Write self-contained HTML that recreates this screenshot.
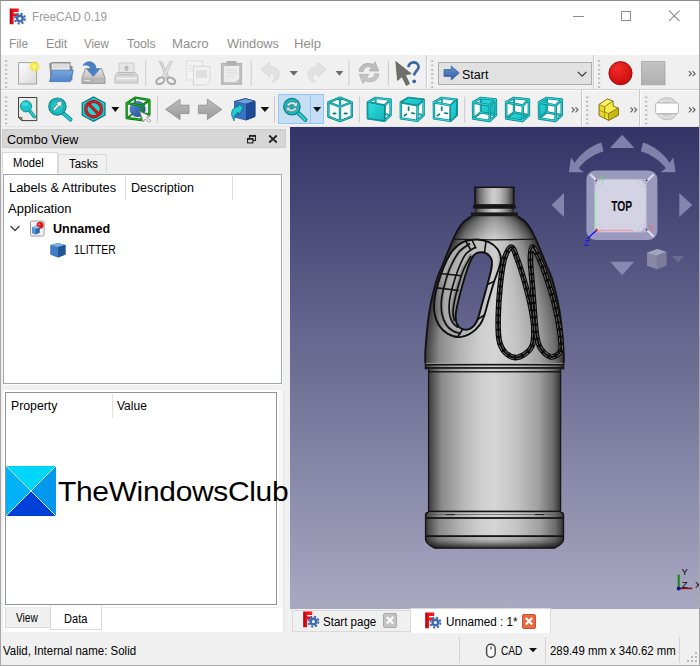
<!DOCTYPE html>
<html><head><meta charset="utf-8"><title>FreeCAD 0.19</title>
<style>
html,body{margin:0;padding:0}
body{width:700px;height:666px;position:relative;overflow:hidden;background:#f0f0f0;font-family:"Liberation Sans",sans-serif;font-size:12px;color:#000}
.a{position:absolute}
.t{position:absolute;white-space:nowrap;line-height:14px}
#title{left:0;top:0;width:700px;height:31px;background:#fff}
#menu{left:0;top:31px;width:700px;height:23.5px;background:#fff}
#menu .t{color:#8e8e8e;font-size:12.5px;top:6.4px}
.grip{position:absolute;width:3px;height:27px;background-image:repeating-linear-gradient(180deg,#a6a6a6 0,#a6a6a6 1.6px,transparent 1.6px,transparent 4.3px)}
.sep{position:absolute;width:1px;height:25px;background:#c9c9c9}
.tbend{position:absolute;width:1px;background:#c4c4c4;box-shadow:1px 0 0 #fafafa}
</style></head>
<body>
<!-- title bar -->
<div id="title" class="a">
  <svg class="a" style="left:9px;top:7.5px" width="18" height="17" viewBox="0 0 17 17"><defs><linearGradient id="gfr1" x1="0" y1="0" x2="1" y2="0"><stop offset="0" stop-color="#a8000c"/><stop offset="0.35" stop-color="#e8101a"/><stop offset="1" stop-color="#ff1a1a"/></linearGradient></defs><path d="M0.2 0.4H9.2V3.9H4.1V5.6H7.8V8.3H4.1V16.2H0.2Z" fill="url(#gfr1)"/><circle cx="10.4" cy="10.6" r="4" fill="#3b69ad"/><circle cx="10.4" cy="10.6" r="5" fill="none" stroke="#3b69ad" stroke-width="1.9" stroke-dasharray="2.1 1.827"/><circle cx="10.4" cy="10.6" r="1.6" fill="#f4f6fa"/></svg>
  <div class="t" id="t_title" style="left:31.9px;top:10px;font-size:12.5px;color:#9b9b9b;transform-origin:0 0;transform:scaleX(0.938)">FreeCAD 0.19</div>
  <div class="a" style="left:572.5px;top:15.5px;width:11px;height:1px;background:#8a8a8a"></div>
  <div class="a" style="left:620.5px;top:10.5px;width:10px;height:10px;border:1px solid #8a8a8a;box-sizing:border-box"></div>
  <svg class="a" style="left:668px;top:10px" width="13" height="12" viewBox="0 0 13 12"><path d="M1 0.7L11.5 11.2M11.5 0.7L1 11.2" stroke="#8a8a8a" stroke-width="1.1" fill="none"/></svg>
</div>
<!-- menu -->
<div id="menu" class="a">
  <div class="t" id="t_file" style="left:9.0px;transform-origin:0 0;transform:scaleX(0.947)">File</div>
  <div class="t" id="t_edit" style="left:45.9px;transform-origin:0 0;transform:scaleX(0.988)">Edit</div>
  <div class="t" id="t_mview" style="left:84.2px;transform-origin:0 0;transform:scaleX(0.922)">View</div>
  <div class="t" id="t_tools" style="left:127.4px;transform-origin:0 0;transform:scaleX(0.984)">Tools</div>
  <div class="t" id="t_macro" style="left:172.3px;transform-origin:0 0;transform:scaleX(1.055)">Macro</div>
  <div class="t" id="t_windows" style="left:226.8px;transform-origin:0 0;transform:scaleX(1.026)">Windows</div>
  <div class="t" id="t_help" style="left:294.3px;transform-origin:0 0;transform:scaleX(1.047)">Help</div>
</div>
<!-- toolbars -->
<div id="tbbg" class="a" style="left:0;top:54.5px;width:700px;height:72.5px;background:#f0f0f0"></div>
<div class="a" style="left:0;top:89px;width:700px;height:1px;background:#d2d2d2"></div><div class="a" style="left:0;top:90px;width:700px;height:1px;background:#fbfbfb"></div>
<div class="a" style="left:0;top:126px;width:700px;height:1px;background:#e4e4e4"></div>
<div class="a" style="left:278px;top:93.5px;width:46px;height:30.5px;background:#c5def5;border:1px solid #93c6f3;box-sizing:border-box"></div>
<div class="a" style="left:310px;top:94px;width:1px;height:29.5px;background:#93c6f3"></div>
<div class="a" style="left:438px;top:62px;width:153.5px;height:22.5px;background:#e1e1e1;border:1px solid #adadad;box-sizing:border-box"></div>
<div class="t" id="t_startwb" style="left:462px;top:67.5px;font-size:12.5px">Start</div>
<svg class="a" style="left:0;top:55px" width="700" height="72" viewBox="0 55 700 72">
<defs>
<linearGradient id="gpage" x1="0" y1="0" x2="1" y2="1"><stop offset="0" stop-color="#fdfdfd"/><stop offset="1" stop-color="#d9d9d9"/></linearGradient>
<radialGradient id="gglow"><stop offset="0" stop-color="#fffef0"/><stop offset="0.3" stop-color="#fff45a"/><stop offset="0.7" stop-color="#f6e428" stop-opacity="0.8"/><stop offset="1" stop-color="#f2e01e" stop-opacity="0"/></radialGradient>
<linearGradient id="gfold" x1="0" y1="0" x2="0" y2="1"><stop offset="0" stop-color="#7ba7dc"/><stop offset="1" stop-color="#4f86c9"/></linearGradient>
<linearGradient id="gdrive" x1="0" y1="0" x2="0" y2="1"><stop offset="0" stop-color="#e6e6e6"/><stop offset="1" stop-color="#a9a9a9"/></linearGradient>
<radialGradient id="gred" cx="0.4" cy="0.3" r="0.8"><stop offset="0" stop-color="#f22a2a"/><stop offset="1" stop-color="#c30a0a"/></radialGradient>
<linearGradient id="ggray" x1="0" y1="0" x2="0" y2="1"><stop offset="0" stop-color="#c3c3c3"/><stop offset="1" stop-color="#b0b0b0"/></linearGradient>
<linearGradient id="garr" x1="0" y1="0" x2="0" y2="1"><stop offset="0" stop-color="#6f97cf"/><stop offset="1" stop-color="#2c5a9e"/></linearGradient>
<linearGradient id="gnav" x1="0" y1="0" x2="0" y2="1"><stop offset="0" stop-color="#bdbdbd"/><stop offset="1" stop-color="#9a9a9a"/></linearGradient>
<linearGradient id="gteal" x1="0" y1="0" x2="1" y2="1"><stop offset="0" stop-color="#2fe0e0"/><stop offset="1" stop-color="#12b4b8"/></linearGradient>
<linearGradient id="gblue" x1="0" y1="0" x2="1" y2="1"><stop offset="0" stop-color="#5b8fd4"/><stop offset="1" stop-color="#1f4f99"/></linearGradient>
</defs>
<rect x="5.2" y="60.3" width="2" height="1.5" fill="#adadad"/>
<rect x="5.2" y="64.6" width="2" height="1.5" fill="#adadad"/>
<rect x="5.2" y="69.0" width="2" height="1.5" fill="#adadad"/>
<rect x="5.2" y="73.3" width="2" height="1.5" fill="#adadad"/>
<rect x="5.2" y="77.7" width="2" height="1.5" fill="#adadad"/>
<rect x="5.2" y="82.0" width="2" height="1.5" fill="#adadad"/>
<rect x="5.2" y="86.4" width="2" height="1.5" fill="#adadad"/>
<rect x="18.6" y="62.6" width="18" height="21.4" fill="url(#gpage)" stroke="#a2a2a2" stroke-width="1"/>
<circle cx="34.4" cy="66.4" r="5.6" fill="url(#gglow)"/>
<path d="M49.2 63.5L52 62H70.5V66H72.5V80.5H50.5Z" fill="#8c8c8c"/>
<path d="M51.5 63.2H69.8V78H51.5Z" fill="#e9e9e9" stroke="#9c9c9c" stroke-width="0.6"/><path d="M53 65H68M53 67H68" stroke="#c8c8c8" stroke-width="0.8"/>
<path d="M52.3 70.2H73.3L70.3 81.6H49.6Z" fill="url(#gfold)" stroke="#3f73b6" stroke-width="0.8"/>
<path d="M85.5 68.5H101.5L105 78V83.5H82V78Z" fill="url(#gdrive)" stroke="#8d8d8d" stroke-width="0.9"/>
<path d="M82.5 78H104.5V83.3H82.5Z" fill="#b4b4b4"/><path d="M84.5 80.5H90" stroke="#e8e8e8" stroke-width="1"/><path d="M96 79.3V82.3M98 79.3V82.3M100 79.3V82.3M102 79.3V82.3" stroke="#c9c9c9" stroke-width="0.8"/>
<path d="M83.2 65.5C85 61 92.5 60 95.5 65.5L95.8 69.3H99.6L93.3 76.3L87 69.3H90.8C90.5 66 86.5 64 83.2 65.5Z" fill="#4a80c4" stroke="#3568ad" stroke-width="0.6"/>
<path d="M119 63H134V73H119Z" fill="#e6e6e6" stroke="#c4c4c4" stroke-width="0.8"/><path d="M126.5 65.3L129.5 68.5H127.7V71H125.3V68.5H123.5Z" fill="#b5b5b5"/>
<path d="M117.5 72.5H135.5L138 76V83H115V76Z" fill="#d8d8d8" stroke="#b4b4b4" stroke-width="0.8"/><path d="M116 78.5H137" stroke="#f2f2f2" stroke-width="1.6"/><path d="M118.5 74.8H134.5" stroke="#bdbdbd" stroke-width="1.2"/>
<rect x="145.2" y="60.7" width="1" height="25.0" fill="#cacaca"/>
<path d="M159.2 61.3L162 62L169 77L166.5 78.5Z" fill="#d8d8d8" stroke="#b4b4b4" stroke-width="0.6"/><path d="M172.2 61.3L169.5 62L162.3 77L164.8 78.5Z" fill="#e2e2e2" stroke="#b4b4b4" stroke-width="0.6"/>
<ellipse cx="160.3" cy="80.8" rx="4.3" ry="2.9" transform="rotate(-30 160.3 80.8)" fill="none" stroke="#a8a8a8" stroke-width="2"/><ellipse cx="171.2" cy="80.8" rx="4.3" ry="2.9" transform="rotate(30 171.2 80.8)" fill="none" stroke="#a8a8a8" stroke-width="2"/>
<rect x="186.3" y="61" width="16" height="19" fill="#f4f4f4" stroke="#d6d6d6" stroke-width="0.8"/><path d="M188.5 66H197M188.5 68.5H197M188.5 71H197" stroke="#dcdcdc" stroke-width="0.8"/>
<path d="M193.5 66.3H210V81L206 85H193.5Z" fill="#f1f1f1" stroke="#d0d0d0" stroke-width="0.8"/><rect x="196" y="70" width="11" height="8" fill="#e0e0e0"/>
<rect x="221.3" y="63.3" width="20.4" height="21" fill="#bcbcbc" stroke="#adadad" stroke-width="0.8"/><rect x="223.8" y="66" width="15.4" height="16.3" fill="#ececec"/><rect x="226.5" y="61" width="10" height="4.6" rx="1" fill="#b0b0b0"/><path d="M226 70H237M226 73H237M226 76H234" stroke="#dadada" stroke-width="1"/><path d="M239.2 78.5V82.3H235.5Z" fill="#c4c4c4"/>
<rect x="250.7" y="60.7" width="1" height="25.0" fill="#cacaca"/>
<path d="M260.8 69.5L269.5 62.3V66.8C276 66.5 279.6 70.5 279 75.5C278.6 79.5 275.5 82 271.5 82.3C274.3 80.5 275.3 78 274.3 75.8C273.5 74 271.8 73.2 269.5 73.3V77Z" fill="#e2e2e2" stroke="#d3d3d3" stroke-width="0.7"/>
<path d="M289.6 71.0H297.9L293.8 75.8Z" fill="#6a6a6a"/>
<path d="M326.4 69.5L317.7 62.3V66.8C311.2 66.5 307.6 70.5 308.2 75.5C308.6 79.5 311.7 82 315.7 82.3C312.9 80.5 311.9 78 312.9 75.8C313.7 74 315.4 73.2 317.7 73.3V77Z" fill="#e2e2e2" stroke="#d3d3d3" stroke-width="0.7"/>
<path d="M335.6 71.0H343.3L339.5 75.8Z" fill="#6a6a6a"/>
<rect x="348.4" y="60.7" width="1" height="25.0" fill="#cacaca"/>
<path d="M359 71.5C359.5 64.5 367 61.5 373 64.5L375.2 61.8L378.8 71H369.3L371.3 67.5C367.5 65.8 363.8 67.5 363.3 71.5Z" fill="#bdbdbd" stroke="#a6a6a6" stroke-width="0.6"/>
<path d="M379 73.8C378.5 80.8 371 83.8 365 80.8L362.8 83.5L359.2 74.3H368.7L366.7 77.8C370.5 79.5 374.2 77.8 374.7 73.8Z" fill="#c4c4c4" stroke="#a6a6a6" stroke-width="0.6"/>
<rect x="387.9" y="60.7" width="1" height="25.0" fill="#cacaca"/>
<path d="M395.8 61.5L411.3 73.8L405.3 74.8L409.5 83.8L406.3 85.4L402 76.5L397.6 80.5Z" fill="#6e6e6a" stroke="#565652" stroke-width="0.7"/>
<path d="M408.6 67.2C408.6 60.8 418.6 60.8 418.6 67C418.6 70.5 414.2 71.2 414.2 75.6" stroke="#3a66a7" stroke-width="2.6" fill="none"/><circle cx="414.2" cy="81.3" r="1.9" fill="#3a66a7"/>
<rect x="425.9" y="55.0" width="1" height="34.0" fill="#c6c6c6"/><rect x="426.9" y="55.0" width="1" height="34.0" fill="#fcfcfc"/>
<rect x="431.2" y="60.3" width="2" height="1.5" fill="#adadad"/>
<rect x="431.2" y="64.6" width="2" height="1.5" fill="#adadad"/>
<rect x="431.2" y="69.0" width="2" height="1.5" fill="#adadad"/>
<rect x="431.2" y="73.3" width="2" height="1.5" fill="#adadad"/>
<rect x="431.2" y="77.7" width="2" height="1.5" fill="#adadad"/>
<rect x="431.2" y="82.0" width="2" height="1.5" fill="#adadad"/>
<rect x="431.2" y="86.4" width="2" height="1.5" fill="#adadad"/>
<path d="M444 69.6H451.3V66L459.2 73L451.3 80V76.4H444Z" fill="url(#garr)" stroke="#2b55a0" stroke-width="0.7"/>
<path d="M577.8 71.9L582.1 76.2L586.4 71.9" stroke="#3c3c3c" stroke-width="1.3" fill="none"/>
<rect x="592.9" y="55.0" width="1" height="34.0" fill="#c6c6c6"/><rect x="593.9" y="55.0" width="1" height="34.0" fill="#fcfcfc"/>
<rect x="598.2" y="60.3" width="2" height="1.5" fill="#adadad"/>
<rect x="598.2" y="64.6" width="2" height="1.5" fill="#adadad"/>
<rect x="598.2" y="69.0" width="2" height="1.5" fill="#adadad"/>
<rect x="598.2" y="73.3" width="2" height="1.5" fill="#adadad"/>
<rect x="598.2" y="77.7" width="2" height="1.5" fill="#adadad"/>
<rect x="598.2" y="82.0" width="2" height="1.5" fill="#adadad"/>
<rect x="598.2" y="86.4" width="2" height="1.5" fill="#adadad"/>
<circle cx="620.5" cy="73.2" r="11.6" fill="url(#gred)" stroke="#9c0808" stroke-width="0.9"/>
<rect x="641.6" y="61.6" width="23.4" height="23.2" fill="url(#ggray)" stroke="#a2a2a2" stroke-width="0.8"/>
<path d="M688.9 71.2l2.4 2.5l-2.4 2.5M692.6 71.2l2.4 2.5l-2.4 2.5" stroke="#606060" stroke-width="1.2" fill="none"/>
<rect x="5.2" y="96.6" width="2" height="1.5" fill="#adadad"/>
<rect x="5.2" y="100.9" width="2" height="1.5" fill="#adadad"/>
<rect x="5.2" y="105.3" width="2" height="1.5" fill="#adadad"/>
<rect x="5.2" y="109.6" width="2" height="1.5" fill="#adadad"/>
<rect x="5.2" y="114.0" width="2" height="1.5" fill="#adadad"/>
<rect x="5.2" y="118.3" width="2" height="1.5" fill="#adadad"/>
<rect x="5.2" y="122.7" width="2" height="1.5" fill="#adadad"/>
<path d="M18.5 97.5H36.8V120.6H22L18.5 117.4Z" fill="#ecece8" stroke="#2a2a2a" stroke-width="0.9"/><path d="M18.5 117.4H22V120.6Z" fill="#9a9a9a" stroke="#2a2a2a" stroke-width="0.6"/>
<path d="M29.5 110.5L34.3 116.8" stroke="#0b8e92" stroke-width="3.4" stroke-linecap="round"/><path d="M29.5 110.5L34.3 116.8" stroke="#22cfd2" stroke-width="1.8" stroke-linecap="round"/><circle cx="26" cy="106.3" r="5.6" fill="#1fc4c8" stroke="#0b8e92" stroke-width="0.9"/><ellipse cx="25" cy="104.3" rx="3.2" ry="2" fill="#4fe0e2" opacity="0.7"/>
<path d="M63.5 113.5L70.5 119.6" stroke="#0b8e92" stroke-width="4" stroke-linecap="round"/><path d="M63.5 113.5L70.5 119.6" stroke="#22cfd2" stroke-width="2.2" stroke-linecap="round"/>
<circle cx="57.4" cy="106.6" r="8.6" fill="#1fc4c8" stroke="#0b8286" stroke-width="1.2"/><circle cx="57.4" cy="106.6" r="6.6" fill="none" stroke="#0fa4a8" stroke-width="1"/>
<path d="M62 101.3L61 107.2L59.3 105.6L54.5 110.8L52.8 109.2L57.7 104L56 102.4Z" fill="#f4f4f4" stroke="#707070" stroke-width="0.6"/>
<path d="M93.6 97L105 103V115.2L93.6 121.2L82.2 115.2V103Z" fill="#24d3d8" stroke="#0a6f74" stroke-width="1.2"/><path d="M93.6 99.6L102.8 104.4V113.9L93.6 118.7L84.4 113.9V104.4Z" fill="none" stroke="#139da2" stroke-width="0.9"/>
<circle cx="93.6" cy="109.1" r="7.7" fill="none" stroke="#8c1010" stroke-width="3"/><circle cx="93.6" cy="109.1" r="7.7" fill="none" stroke="#e01c1c" stroke-width="1.9"/><path d="M88.3 103.8L98.9 114.4" stroke="#8c1010" stroke-width="3"/><path d="M88.3 103.8L98.9 114.4" stroke="#e01c1c" stroke-width="1.9"/>
<path d="M111.4 107.0H119.3L115.3 111.9Z" fill="#111"/>
<path d="M126.6 103.1L135.1 97.7L149.4 100V114L141.7 120L126.7 118Z" fill="#eef0ee"/>
<path d="M135.1 97.7V112.4L126.7 118M135.1 112.4L149.4 114" fill="none" stroke="#0a6a10" stroke-width="1.6"/><path d="M135.1 97.7V112.4L126.7 118M135.1 112.4L149.4 114" fill="none" stroke="#22c42c" stroke-width="0.7"/>
<circle cx="137.7" cy="109.1" r="7.6" fill="url(#gblue)" stroke="#1b3f80" stroke-width="0.6"/>
<path d="M126.6 103.1L142 105.7L141.7 120L126.7 118ZM126.6 103.1L135.1 97.7L149.4 100L142 105.7M149.4 100V114L141.7 120" fill="none" stroke="#0a6a10" stroke-width="2.3" stroke-linejoin="round"/><path d="M126.6 103.1L142 105.7L141.7 120L126.7 118ZM126.6 103.1L135.1 97.7L149.4 100L142 105.7M149.4 100V114L141.7 120" fill="none" stroke="#1cc026" stroke-width="0.9" stroke-linejoin="round"/>
<path d="M139.7 111.3L150.2 116.4L146.6 117.3L150.8 120.6L149.3 122.2L145.2 118.9L143.4 122Z" fill="#f8f8f8" stroke="#7a7a7a" stroke-width="0.7"/>
<rect x="156.9" y="96.5" width="1" height="26.0" fill="#cacaca"/>
<path d="M165.6 109.4L180 99.2V105.2H189V113.6H180V119.6Z" fill="url(#gnav)" stroke="#8a8a8a" stroke-width="0.8"/>
<path d="M221.8 109.4L207.4 99.2V105.2H198.4V113.6H207.4V119.6Z" fill="url(#gnav)" stroke="#8a8a8a" stroke-width="0.8"/>
<path d="M234.5 101.5L245.5 98.6L255 101.3V116.5L246 120L234.5 117Z" fill="#2a5fb0" stroke="#173a78" stroke-width="0.8"/><path d="M234.5 101.5L245.5 98.6L255 101.3L246 104.2Z" fill="#6fa0de" stroke="#173a78" stroke-width="0.6"/><path d="M246 104.2L255 101.3V116.5L246 120Z" fill="#1f4c98" stroke="#173a78" stroke-width="0.6"/><path d="M234.5 101.5L246 104.2V120L234.5 117Z" fill="#3a72c4"/>
<path d="M243.3 107.3L238 103.8L238.3 106.6C233.5 107 230.6 111 232 116.2L234.2 120.8C234 116.5 235.5 113.2 238.6 112.6L238.9 115.3Z" fill="#22cdd2" stroke="#0a6f74" stroke-width="0.8"/>
<path d="M260.6 107.0H269.2L264.9 112.0Z" fill="#111"/>
<rect x="274.0" y="96.5" width="1" height="26.0" fill="#cacaca"/>
<path d="M298 112.8L305.4 119.8" stroke="#0b7c80" stroke-width="4.2" stroke-linecap="round"/><path d="M298 112.8L305.4 119.8" stroke="#24d2d6" stroke-width="2.3" stroke-linecap="round"/>
<circle cx="291.9" cy="106.7" r="8.3" fill="#19b6ba" stroke="#0b7c80" stroke-width="1.1"/><circle cx="291.9" cy="106.7" r="5.4" fill="#17a6aa"/>
<path d="M286.9 105.6C287.8 101.9 293 101 295.8 103.3L297.2 102V106.2H293L294.4 104.8C292.7 103.7 289.9 104 289 105.9Z" fill="#f0f0f0" stroke="#5f7f80" stroke-width="0.5"/><path d="M296.9 107.9C296 111.6 290.8 112.5 288 110.2L286.6 111.5V107.3H290.8L289.4 108.7C291.1 109.8 293.9 109.5 294.8 107.6Z" fill="#e4e4e4" stroke="#5f7f80" stroke-width="0.5"/>
<path d="M313.1 107.0H321.2L317.1 112.0Z" fill="#111"/>
<path d="M340 97.6L351.8 102.2V116.6L340 121.2L328.4 116.6V102.2Z" fill="#f6f8f8"/>
<path d="M340 97.6L351.8 102.2V116.6L340 121.2L328.4 116.6V102.2ZM328.4 102.2L340 106.8L351.8 102.2M340 106.8V121.2M340 97.6V105" fill="none" stroke="#0a7c80" stroke-width="2.3" stroke-linejoin="round"/><path d="M340 97.6L351.8 102.2V116.6L340 121.2L328.4 116.6V102.2ZM328.4 102.2L340 106.8L351.8 102.2M340 106.8V121.2M340 97.6V105" fill="none" stroke="#27d4d8" stroke-width="0.9" stroke-linejoin="round"/>
<ellipse cx="334.5" cy="113.6" rx="2.1" ry="1" fill="#0a7c80"/><ellipse cx="345.7" cy="113.6" rx="2.1" ry="1" fill="#0a7c80"/>
<rect x="358.9" y="96.5" width="1" height="26.0" fill="#cacaca"/>
<path d="M367.8 102.4L375.6 97.9L390.6 99.6L390.6 115.2L384.4 120.9L367.9 118.4Z" fill="#f8fafa"/>
<path d="M375.6 97.9L375.6 103.7 M390.6 115.2L385.4 114.2" fill="none" stroke="#0a7c80" stroke-width="1.8" stroke-linejoin="round"/><path d="M375.6 97.9L375.6 103.7 M390.6 115.2L385.4 114.2" fill="none" stroke="#27d4d8" stroke-width="0.7" stroke-linejoin="round"/>
<path d="M367.8 102.4L384.6 105.4L384.4 120.9L367.9 118.4Z M367.8 102.4L384.6 105.4L390.6 99.6L375.6 97.9Z M384.6 105.4L390.6 99.6L390.6 115.2L384.4 120.9Z" fill="none" stroke="#0a7c80" stroke-width="2.4" stroke-linejoin="round"/><path d="M367.8 102.4L384.6 105.4L384.4 120.9L367.9 118.4Z M367.8 102.4L384.6 105.4L390.6 99.6L375.6 97.9Z M384.6 105.4L390.6 99.6L390.6 115.2L384.4 120.9Z" fill="none" stroke="#27d4d8" stroke-width="1.1" stroke-linejoin="round"/>
<path d="M367.8 102.4L384.6 105.4L384.4 120.9L367.9 118.4Z" fill="url(#gteal)" stroke="#0a7c80" stroke-width="0.9" stroke-linejoin="round"/>
<path d="M400.8 102.4L408.6 97.9L423.6 99.6L423.6 115.2L417.4 120.9L400.9 118.4Z" fill="#f8fafa"/>
<path d="M423.6 115.2L418.4 114.2" fill="none" stroke="#0a7c80" stroke-width="1.8" stroke-linejoin="round"/><path d="M423.6 115.2L418.4 114.2" fill="none" stroke="#27d4d8" stroke-width="0.7" stroke-linejoin="round"/>
<path d="M408.6 110.2L408.6 107.2 M411.6 113.0L414.3 113.5 M406.3 114.2L404.4 115.7" stroke="#0a7c80" stroke-width="1.7" stroke-linecap="round" fill="none"/>
<path d="M400.8 102.4L417.6 105.4L417.4 120.9L400.9 118.4Z M400.8 102.4L417.6 105.4L423.6 99.6L408.6 97.9Z M417.6 105.4L423.6 99.6L423.6 115.2L417.4 120.9Z" fill="none" stroke="#0a7c80" stroke-width="2.4" stroke-linejoin="round"/><path d="M400.8 102.4L417.6 105.4L417.4 120.9L400.9 118.4Z M400.8 102.4L417.6 105.4L423.6 99.6L408.6 97.9Z M417.6 105.4L423.6 99.6L423.6 115.2L417.4 120.9Z" fill="none" stroke="#27d4d8" stroke-width="1.1" stroke-linejoin="round"/>
<path d="M400.8 102.4L417.6 105.4L423.6 99.6L408.6 97.9Z" fill="url(#gteal)" stroke="#0a7c80" stroke-width="0.9" stroke-linejoin="round"/>
<path d="M433.9 102.4L441.7 97.9L456.7 99.6L456.7 115.2L450.5 120.9L434.0 118.4Z" fill="#f8fafa"/>
<path d="M441.7 97.9L441.7 104.4" fill="none" stroke="#0a7c80" stroke-width="1.8" stroke-linejoin="round"/><path d="M441.7 97.9L441.7 104.4" fill="none" stroke="#27d4d8" stroke-width="0.7" stroke-linejoin="round"/>
<path d="M441.7 110.2L441.7 107.2 M444.7 113.0L447.4 113.5 M439.4 114.2L437.5 115.7" stroke="#0a7c80" stroke-width="1.7" stroke-linecap="round" fill="none"/>
<path d="M433.9 102.4L450.7 105.4L450.5 120.9L434.0 118.4Z M433.9 102.4L450.7 105.4L456.7 99.6L441.7 97.9Z M450.7 105.4L456.7 99.6L456.7 115.2L450.5 120.9Z" fill="none" stroke="#0a7c80" stroke-width="2.4" stroke-linejoin="round"/><path d="M433.9 102.4L450.7 105.4L450.5 120.9L434.0 118.4Z M433.9 102.4L450.7 105.4L456.7 99.6L441.7 97.9Z M450.7 105.4L456.7 99.6L456.7 115.2L450.5 120.9Z" fill="none" stroke="#27d4d8" stroke-width="1.1" stroke-linejoin="round"/>
<path d="M450.7 105.4L456.7 99.6L456.7 115.2L450.5 120.9Z" fill="url(#gteal)" stroke="#0a7c80" stroke-width="0.9" stroke-linejoin="round"/>
<rect x="464.2" y="96.5" width="1" height="26.0" fill="#cacaca"/>
<path d="M473.1 102.4L480.9 97.9L495.9 99.6L495.9 115.2L489.7 120.9L473.2 118.4Z" fill="#f8fafa"/>
<path d="M480.9 97.9L495.9 99.6L495.9 115.2L480.9 112.4Z" fill="url(#gteal)"/>
<path d="M480.9 112.4 L480.9 97.9 M480.9 112.4 L495.9 115.2 M480.9 112.4 L473.2 118.4" fill="none" stroke="#0a7c80" stroke-width="2.2" stroke-linejoin="round"/><path d="M480.9 112.4 L480.9 97.9 M480.9 112.4 L495.9 115.2 M480.9 112.4 L473.2 118.4" fill="none" stroke="#27d4d8" stroke-width="0.9" stroke-linejoin="round"/>
<path d="M473.1 102.4L489.9 105.4L489.7 120.9L473.2 118.4Z M473.1 102.4L489.9 105.4L495.9 99.6L480.9 97.9Z M489.9 105.4L495.9 99.6L495.9 115.2L489.7 120.9Z" fill="none" stroke="#0a7c80" stroke-width="2.5" stroke-linejoin="round"/><path d="M473.1 102.4L489.9 105.4L489.7 120.9L473.2 118.4Z M473.1 102.4L489.9 105.4L495.9 99.6L480.9 97.9Z M489.9 105.4L495.9 99.6L495.9 115.2L489.7 120.9Z" fill="none" stroke="#27d4d8" stroke-width="1.1" stroke-linejoin="round"/>
<path d="M506.1 102.4L513.9 97.9L528.9 99.6L528.9 115.2L522.7 120.9L506.2 118.4Z" fill="#f8fafa"/>
<path d="M506.2 118.4L522.7 120.9L528.9 115.2L513.9 112.4Z" fill="url(#gteal)"/>
<path d="M513.9 112.4 L513.9 97.9 M513.9 112.4 L528.9 115.2 M513.9 112.4 L506.2 118.4" fill="none" stroke="#0a7c80" stroke-width="2.2" stroke-linejoin="round"/><path d="M513.9 112.4 L513.9 97.9 M513.9 112.4 L528.9 115.2 M513.9 112.4 L506.2 118.4" fill="none" stroke="#27d4d8" stroke-width="0.9" stroke-linejoin="round"/>
<path d="M506.1 102.4L522.9 105.4L522.7 120.9L506.2 118.4Z M506.1 102.4L522.9 105.4L528.9 99.6L513.9 97.9Z M522.9 105.4L528.9 99.6L528.9 115.2L522.7 120.9Z" fill="none" stroke="#0a7c80" stroke-width="2.5" stroke-linejoin="round"/><path d="M506.1 102.4L522.9 105.4L522.7 120.9L506.2 118.4Z M506.1 102.4L522.9 105.4L528.9 99.6L513.9 97.9Z M522.9 105.4L528.9 99.6L528.9 115.2L522.7 120.9Z" fill="none" stroke="#27d4d8" stroke-width="1.1" stroke-linejoin="round"/>
<path d="M539.0 102.4L546.8 97.9L561.8 99.6L561.8 115.2L555.6 120.9L539.1 118.4Z" fill="#f8fafa"/>
<path d="M539.0 102.4L546.8 97.9L546.8 112.4L539.1 118.4Z" fill="url(#gteal)"/>
<path d="M546.8 112.4 L546.8 97.9 M546.8 112.4 L561.8 115.2 M546.8 112.4 L539.1 118.4" fill="none" stroke="#0a7c80" stroke-width="2.2" stroke-linejoin="round"/><path d="M546.8 112.4 L546.8 97.9 M546.8 112.4 L561.8 115.2 M546.8 112.4 L539.1 118.4" fill="none" stroke="#27d4d8" stroke-width="0.9" stroke-linejoin="round"/>
<path d="M539.0 102.4L555.8 105.4L555.6 120.9L539.1 118.4Z M539.0 102.4L555.8 105.4L561.8 99.6L546.8 97.9Z M555.8 105.4L561.8 99.6L561.8 115.2L555.6 120.9Z" fill="none" stroke="#0a7c80" stroke-width="2.5" stroke-linejoin="round"/><path d="M539.0 102.4L555.8 105.4L555.6 120.9L539.1 118.4Z M539.0 102.4L555.8 105.4L561.8 99.6L546.8 97.9Z M555.8 105.4L561.8 99.6L561.8 115.2L555.6 120.9Z" fill="none" stroke="#27d4d8" stroke-width="1.1" stroke-linejoin="round"/>
<path d="M571.8 107.3l2.4 2.5l-2.4 2.5M575.5 107.3l2.4 2.5l-2.4 2.5" stroke="#606060" stroke-width="1.2" fill="none"/>
<rect x="581.0" y="90.0" width="1" height="36.0" fill="#c6c6c6"/><rect x="582.0" y="90.0" width="1" height="36.0" fill="#fcfcfc"/>
<rect x="586.2" y="96.6" width="2" height="1.5" fill="#adadad"/>
<rect x="586.2" y="100.9" width="2" height="1.5" fill="#adadad"/>
<rect x="586.2" y="105.3" width="2" height="1.5" fill="#adadad"/>
<rect x="586.2" y="109.6" width="2" height="1.5" fill="#adadad"/>
<rect x="586.2" y="114.0" width="2" height="1.5" fill="#adadad"/>
<rect x="586.2" y="118.3" width="2" height="1.5" fill="#adadad"/>
<rect x="586.2" y="122.7" width="2" height="1.5" fill="#adadad"/>
<path d="M599 104.5L607.5 99L613 101.2V106L618.3 108.2V115.2L608.5 120.4L599 115.5Z" fill="#e9d92a" stroke="#6f6408" stroke-width="0.9"/>
<path d="M599 104.5L607.5 99L613 101.2L604.6 106.8Z" fill="#fbf06a" stroke="#6f6408" stroke-width="0.6"/><path d="M604.6 106.8L613 101.2V106L618.3 108.2L608.5 113.6L604.6 111.8Z" fill="#f6e94a" stroke="#6f6408" stroke-width="0.6"/><path d="M608.5 113.6L618.3 108.2V115.2L608.5 120.4Z" fill="#c9b81a" stroke="#6f6408" stroke-width="0.6"/><path d="M599 110L604.6 112.5M604.6 106.8V117.8" stroke="#8a7c10" stroke-width="0.7" fill="none"/>
<path d="M630.5 107.3l2.4 2.5l-2.4 2.5M634.2 107.3l2.4 2.5l-2.4 2.5" stroke="#606060" stroke-width="1.2" fill="none"/>
<rect x="639.1" y="90.0" width="1" height="36.0" fill="#c6c6c6"/><rect x="640.1" y="90.0" width="1" height="36.0" fill="#fcfcfc"/>
<rect x="645.2" y="96.6" width="2" height="1.5" fill="#adadad"/>
<rect x="645.2" y="100.9" width="2" height="1.5" fill="#adadad"/>
<rect x="645.2" y="105.3" width="2" height="1.5" fill="#adadad"/>
<rect x="645.2" y="109.6" width="2" height="1.5" fill="#adadad"/>
<rect x="645.2" y="114.0" width="2" height="1.5" fill="#adadad"/>
<rect x="645.2" y="118.3" width="2" height="1.5" fill="#adadad"/>
<rect x="645.2" y="122.7" width="2" height="1.5" fill="#adadad"/>
<circle cx="667" cy="108.7" r="11.2" fill="#d6d6d6" stroke="#b8b8b8" stroke-width="0.8"/><circle cx="667" cy="108.7" r="8.6" fill="#c2c2c2" stroke="#e6e6e6" stroke-width="0.8"/><path d="M660 101.5L674 101.5M659.5 116L674.5 116" stroke="#ececec" stroke-width="1.2" stroke-dasharray="2 1.2"/>
<rect x="655.6" y="103" width="22.8" height="10.6" rx="1.2" fill="#fdfdfd" stroke="#b4b4b4" stroke-width="0.9"/>
<path d="M688.9 107.3l2.4 2.5l-2.4 2.5M692.6 107.3l2.4 2.5l-2.4 2.5" stroke="#606060" stroke-width="1.2" fill="none"/>
</svg>
<!-- left panel -->
<div id="combo" class="a" style="left:0;top:127px;width:290px;height:509px;background:#f0f0f0">
  <!-- dock title -->
  <div class="a" style="left:2px;top:2px;width:284px;height:19px;background:#d6d6d6;box-shadow:inset 0 0 0 1px #cbcbcb"></div>
  <div class="t" id="t_combo" style="left:7.2px;top:6px;font-size:12.5px;transform-origin:0 0;transform:scaleX(1.009)">Combo View</div>
  <svg class="a" style="left:245.5px;top:6.5px" width="11" height="10" viewBox="0 0 11 10"><rect x="3.5" y="1.5" width="6" height="5" fill="none" stroke="#222" stroke-width="1.1"/><rect x="3" y="1" width="7" height="1.8" fill="#222"/><rect x="1.5" y="4.5" width="5.4" height="4.4" fill="#d6d6d6" stroke="#222" stroke-width="1.1"/><rect x="1" y="4" width="6.4" height="1.8" fill="#222"/></svg>
  <svg class="a" style="left:268px;top:7px" width="10" height="10" viewBox="0 0 10 10"><path d="M1.2 1.5L8.8 8.5M8.8 1.5L1.2 8.5" stroke="#222" stroke-width="1.7" fill="none"/></svg>
  <!-- tabs Model/Tasks -->
  <div class="a" style="left:58px;top:27px;width:49px;height:19px;background:#f0f0f0;border:1px solid #d9d9d9;border-bottom:none;box-sizing:border-box"></div>
  <div class="a" style="left:2px;top:25px;width:56px;height:22px;background:#fff;border:1px solid #d9d9d9;border-bottom:none;box-sizing:border-box"></div>
  <div class="t" id="t_model" style="left:12.9px;top:29px;transform-origin:0 0;transform:scaleX(0.938)">Model</div>
  <div class="t" id="t_tasks" style="left:68.8px;top:30px;transform-origin:0 0;transform:scaleX(0.945)">Tasks</div>
  <!-- tree -->
  <div class="a" style="left:3px;top:47px;width:279px;height:210px;background:#fff;border:1px solid #a3a7ae;box-sizing:border-box;box-shadow:1px 1px 0 #fff"></div>
  <div class="a" style="left:125px;top:49px;width:1px;height:24px;background:#e0e0e0"></div>
  <div class="a" style="left:232px;top:49px;width:1px;height:24px;background:#e0e0e0"></div>
  <div class="t" id="t_labels" style="left:9.0px;top:54px;transform-origin:0 0;transform:scaleX(1.070)">Labels &amp; Attributes</div>
  <div class="t" id="t_desc" style="left:131.0px;top:54px;transform-origin:0 0;transform:scaleX(1.050)">Description</div>
  <div class="t" id="t_app" style="left:8.0px;top:75px;transform-origin:0 0;transform:scaleX(1.083)">Application</div>
  <svg class="a" style="left:9px;top:97px" width="12" height="9" viewBox="0 0 12 9"><path d="M1.5 2L6 6.5L10.5 2" stroke="#444" stroke-width="1.4" fill="none"/></svg>
  <!-- doc icon -->
  <svg class="a" style="left:29px;top:93px" width="17" height="17" viewBox="0 0 17 17">
    <rect x="1.5" y="1" width="13.6" height="15" rx="1.3" fill="#f2f2f2" stroke="#9c9c9c"/>
    <circle cx="11" cy="5.3" r="3.5" fill="#e31212"/><circle cx="10.2" cy="4.4" r="1.2" fill="#f46a6a"/>
    <path d="M3 7.2L7.3 5.8L10.8 7.4V12.8L6.8 14.6L3 12.9Z" fill="#2c63ac"/><path d="M3 7.2L6.8 8.8V14.6L3 12.9Z" fill="#5a93d4"/><path d="M3 7.2L7.3 5.8L10.8 7.4L6.8 8.8Z" fill="#9cc2ea"/>
  </svg>
  <div class="t" id="t_unnamed" style="left:52.8px;top:95px;font-weight:bold;transform-origin:0 0;transform:scaleX(1.044)">Unnamed</div>
  <!-- cube icon -->
  <svg class="a" style="left:49px;top:114px" width="18" height="18" viewBox="0 0 18 18">
    <path d="M1.5 4L9 2L16.5 4V13.5L9 16.5L1.5 13.5Z" fill="#2b62a8"/>
    <path d="M1.5 4L9 6V16.5L1.5 13.5Z" fill="#3f7cc4"/>
    <path d="M1.5 4L9 2L16.5 4L9 6Z" fill="#7fb0e4"/>
    <path d="M9 6L16.5 4V13.5L9 16.5Z" fill="#24549a"/>
  </svg>
  <div class="t" id="t_litter" style="left:74.0px;top:116px;transform-origin:0 0;transform:scaleX(0.872)">1LITTER</div>
  <!-- property tab widget -->
  <div class="a" style="left:3px;top:262.5px;width:280.5px;height:242.5px;background:#fff;box-shadow:inset -1px 0 0 #e4e4e4"></div><div class="a" style="left:279px;top:263px;width:4px;height:218px;background:#f7f7f7"></div>
  <div class="a" style="left:5px;top:265px;width:272px;height:213px;background:#fff;border:1px solid #8f949c;box-sizing:border-box"></div>
  <div class="a" style="left:112px;top:267px;width:1px;height:24px;background:#e0e0e0"></div>
  <div class="t" id="t_prop" style="left:11.0px;top:272px;transform-origin:0 0;transform:scaleX(1.022)">Property</div>
  <div class="t" id="t_value" style="left:117.0px;top:272px;transform-origin:0 0;transform:scaleX(1.000)">Value</div>
  <div class="a" style="left:3px;top:479.6px;width:276px;height:1.2px;background:#eeeeee"></div>
  <!-- bottom tabs -->
  <div class="a" style="left:5px;top:481px;width:46px;height:20px;background:#f0f0f0;border:1px solid #d9d9d9;border-top:none;box-sizing:border-box"></div>
  <div class="a" style="left:50px;top:479px;width:52px;height:24px;background:#fff;border:1px solid #d9d9d9;border-top:none;box-sizing:border-box"></div>
  <div class="t" id="t_view" style="left:16.0px;top:484px;transform-origin:0 0;transform:scaleX(0.846)">View</div>
  <div class="t" id="t_data" style="left:64.0px;top:485px;transform-origin:0 0;transform:scaleX(0.923)">Data</div>
  <!-- watermark -->
  <svg class="a" style="left:6px;top:339px" width="50" height="50" viewBox="0 0 50 50">
    <path d="M0 0H50L25 25Z" fill="#00d6f7"/><path d="M0 0L25 25L0 50Z" fill="#00b2f7"/><path d="M50 0V50L25 25Z" fill="#0097ec"/><path d="M0 50L25 25L50 50Z" fill="#0040d9"/>
    <path d="M0 0L50 50M50 0L0 50" stroke="#fff" stroke-width="0.8"/>
  </svg>
  <div class="t" id="t_twc" style="left:57.8px;top:349px;font-size:28px;line-height:32px;letter-spacing:-0.3px;transform-origin:0 0;transform:scaleX(1.070)">TheWindowsClub</div>
</div>
<!-- 3d view -->
<div id="view" class="a" style="left:290px;top:127px;width:410px;height:482px;background:linear-gradient(#333367,#a9a9c2)"></div>
<svg class="a" style="left:290px;top:127px" width="410" height="482" viewBox="290 127 410 482">
<defs><linearGradient id="gb" x1="0" y1="0" x2="1" y2="0"><stop offset="0.000" stop-color="#262626"/><stop offset="0.015" stop-color="#464646"/><stop offset="0.100" stop-color="#8a8a8a"/><stop offset="0.260" stop-color="#b6b6b6"/><stop offset="0.400" stop-color="#cfcfcf"/><stop offset="0.500" stop-color="#d5d5d5"/><stop offset="0.660" stop-color="#c4c4c4"/><stop offset="0.830" stop-color="#a0a0a0"/><stop offset="0.940" stop-color="#6c6c6c"/><stop offset="0.985" stop-color="#404040"/><stop offset="1.000" stop-color="#202020"/></linearGradient>
<linearGradient id="gcham" x1="0" y1="0" x2="0" y2="1"><stop offset="0" stop-color="#000" stop-opacity="0"/><stop offset="0.45" stop-color="#000" stop-opacity="0.25"/><stop offset="1" stop-color="#000" stop-opacity="0.78"/></linearGradient>
<linearGradient id="gtopsh" x1="0" y1="0" x2="0" y2="1"><stop offset="0" stop-color="#000" stop-opacity="0.28"/><stop offset="1" stop-color="#000" stop-opacity="0"/></linearGradient>
<linearGradient id="gb2" x1="0" y1="0" x2="1" y2="0"><stop offset="0.000" stop-color="#1c1c1c"/><stop offset="0.030" stop-color="#3a3a3a"/><stop offset="0.120" stop-color="#6c6c6c"/><stop offset="0.280" stop-color="#a2a2a2"/><stop offset="0.420" stop-color="#c6c6c6"/><stop offset="0.500" stop-color="#cecece"/><stop offset="0.640" stop-color="#bababa"/><stop offset="0.800" stop-color="#8a8a8a"/><stop offset="0.920" stop-color="#565656"/><stop offset="0.980" stop-color="#323232"/><stop offset="1.000" stop-color="#1a1a1a"/></linearGradient>
</defs>
<rect x="471.00" y="216" width="47.00" height="1" fill="url(#gb)"/>
<rect x="471.00" y="216" width="47.00" height="1" fill="url(#gb2)" opacity="1.00"/>
<rect x="469.58" y="217" width="49.84" height="1" fill="url(#gb)"/>
<rect x="469.58" y="217" width="49.84" height="1" fill="url(#gb2)" opacity="0.99"/>
<rect x="468.10" y="218" width="52.80" height="1" fill="url(#gb)"/>
<rect x="468.10" y="218" width="52.80" height="1" fill="url(#gb2)" opacity="0.98"/>
<rect x="466.63" y="219" width="55.74" height="1" fill="url(#gb)"/>
<rect x="466.63" y="219" width="55.74" height="1" fill="url(#gb2)" opacity="0.97"/>
<rect x="465.25" y="220" width="58.51" height="1" fill="url(#gb)"/>
<rect x="465.25" y="220" width="58.51" height="1" fill="url(#gb2)" opacity="0.97"/>
<rect x="464.03" y="221" width="60.95" height="1" fill="url(#gb)"/>
<rect x="464.03" y="221" width="60.95" height="1" fill="url(#gb2)" opacity="0.96"/>
<rect x="463.02" y="222" width="62.96" height="1" fill="url(#gb)"/>
<rect x="463.02" y="222" width="62.96" height="1" fill="url(#gb2)" opacity="0.95"/>
<rect x="462.13" y="223" width="64.75" height="1" fill="url(#gb)"/>
<rect x="462.13" y="223" width="64.75" height="1" fill="url(#gb2)" opacity="0.94"/>
<rect x="461.31" y="224" width="66.37" height="1" fill="url(#gb)"/>
<rect x="461.31" y="224" width="66.37" height="1" fill="url(#gb2)" opacity="0.93"/>
<rect x="460.57" y="225" width="67.86" height="1" fill="url(#gb)"/>
<rect x="460.57" y="225" width="67.86" height="1" fill="url(#gb2)" opacity="0.93"/>
<rect x="459.88" y="226" width="69.24" height="1" fill="url(#gb)"/>
<rect x="459.88" y="226" width="69.24" height="1" fill="url(#gb2)" opacity="0.92"/>
<rect x="459.23" y="227" width="70.54" height="1" fill="url(#gb)"/>
<rect x="459.23" y="227" width="70.54" height="1" fill="url(#gb2)" opacity="0.91"/>
<rect x="458.61" y="228" width="71.78" height="1" fill="url(#gb)"/>
<rect x="458.61" y="228" width="71.78" height="1" fill="url(#gb2)" opacity="0.90"/>
<rect x="458.00" y="229" width="73.00" height="1" fill="url(#gb)"/>
<rect x="458.00" y="229" width="73.00" height="1" fill="url(#gb2)" opacity="0.89"/>
<rect x="457.40" y="230" width="74.20" height="1" fill="url(#gb)"/>
<rect x="457.40" y="230" width="74.20" height="1" fill="url(#gb2)" opacity="0.88"/>
<rect x="456.83" y="231" width="75.34" height="1" fill="url(#gb)"/>
<rect x="456.83" y="231" width="75.34" height="1" fill="url(#gb2)" opacity="0.88"/>
<rect x="456.29" y="232" width="76.42" height="1" fill="url(#gb)"/>
<rect x="456.29" y="232" width="76.42" height="1" fill="url(#gb2)" opacity="0.87"/>
<rect x="455.77" y="233" width="77.46" height="1" fill="url(#gb)"/>
<rect x="455.77" y="233" width="77.46" height="1" fill="url(#gb2)" opacity="0.86"/>
<rect x="455.27" y="234" width="78.46" height="1" fill="url(#gb)"/>
<rect x="455.27" y="234" width="78.46" height="1" fill="url(#gb2)" opacity="0.85"/>
<rect x="454.79" y="235" width="79.42" height="1" fill="url(#gb)"/>
<rect x="454.79" y="235" width="79.42" height="1" fill="url(#gb2)" opacity="0.84"/>
<rect x="454.32" y="236" width="80.36" height="1" fill="url(#gb)"/>
<rect x="454.32" y="236" width="80.36" height="1" fill="url(#gb2)" opacity="0.83"/>
<rect x="453.86" y="237" width="81.28" height="1" fill="url(#gb)"/>
<rect x="453.86" y="237" width="81.28" height="1" fill="url(#gb2)" opacity="0.82"/>
<rect x="453.41" y="238" width="82.18" height="1" fill="url(#gb)"/>
<rect x="453.41" y="238" width="82.18" height="1" fill="url(#gb2)" opacity="0.82"/>
<rect x="452.95" y="239" width="83.09" height="1" fill="url(#gb)"/>
<rect x="452.95" y="239" width="83.09" height="1" fill="url(#gb2)" opacity="0.81"/>
<rect x="452.51" y="240" width="83.99" height="1" fill="url(#gb)"/>
<rect x="452.51" y="240" width="83.99" height="1" fill="url(#gb2)" opacity="0.80"/>
<rect x="452.06" y="241" width="84.88" height="1" fill="url(#gb)"/>
<rect x="452.06" y="241" width="84.88" height="1" fill="url(#gb2)" opacity="0.79"/>
<rect x="451.63" y="242" width="85.75" height="1" fill="url(#gb)"/>
<rect x="451.63" y="242" width="85.75" height="1" fill="url(#gb2)" opacity="0.78"/>
<rect x="451.19" y="243" width="86.61" height="1" fill="url(#gb)"/>
<rect x="451.19" y="243" width="86.61" height="1" fill="url(#gb2)" opacity="0.78"/>
<rect x="450.77" y="244" width="87.47" height="1" fill="url(#gb)"/>
<rect x="450.77" y="244" width="87.47" height="1" fill="url(#gb2)" opacity="0.77"/>
<rect x="450.34" y="245" width="88.31" height="1" fill="url(#gb)"/>
<rect x="450.34" y="245" width="88.31" height="1" fill="url(#gb2)" opacity="0.76"/>
<rect x="449.92" y="246" width="89.15" height="1" fill="url(#gb)"/>
<rect x="449.92" y="246" width="89.15" height="1" fill="url(#gb2)" opacity="0.75"/>
<rect x="449.51" y="247" width="89.99" height="1" fill="url(#gb)"/>
<rect x="449.51" y="247" width="89.99" height="1" fill="url(#gb2)" opacity="0.74"/>
<rect x="449.09" y="248" width="90.81" height="1" fill="url(#gb)"/>
<rect x="449.09" y="248" width="90.81" height="1" fill="url(#gb2)" opacity="0.73"/>
<rect x="448.68" y="249" width="91.64" height="1" fill="url(#gb)"/>
<rect x="448.68" y="249" width="91.64" height="1" fill="url(#gb2)" opacity="0.72"/>
<rect x="448.27" y="250" width="92.46" height="1" fill="url(#gb)"/>
<rect x="448.27" y="250" width="92.46" height="1" fill="url(#gb2)" opacity="0.72"/>
<rect x="447.86" y="251" width="93.28" height="1" fill="url(#gb)"/>
<rect x="447.86" y="251" width="93.28" height="1" fill="url(#gb2)" opacity="0.71"/>
<rect x="447.45" y="252" width="94.10" height="1" fill="url(#gb)"/>
<rect x="447.45" y="252" width="94.10" height="1" fill="url(#gb2)" opacity="0.70"/>
<rect x="447.04" y="253" width="94.92" height="1" fill="url(#gb)"/>
<rect x="447.04" y="253" width="94.92" height="1" fill="url(#gb2)" opacity="0.69"/>
<rect x="446.63" y="254" width="95.73" height="1" fill="url(#gb)"/>
<rect x="446.63" y="254" width="95.73" height="1" fill="url(#gb2)" opacity="0.68"/>
<rect x="446.23" y="255" width="96.54" height="1" fill="url(#gb)"/>
<rect x="446.23" y="255" width="96.54" height="1" fill="url(#gb2)" opacity="0.68"/>
<rect x="445.83" y="256" width="97.33" height="1" fill="url(#gb)"/>
<rect x="445.83" y="256" width="97.33" height="1" fill="url(#gb2)" opacity="0.67"/>
<rect x="445.44" y="257" width="98.12" height="1" fill="url(#gb)"/>
<rect x="445.44" y="257" width="98.12" height="1" fill="url(#gb2)" opacity="0.66"/>
<rect x="445.05" y="258" width="98.90" height="1" fill="url(#gb)"/>
<rect x="445.05" y="258" width="98.90" height="1" fill="url(#gb2)" opacity="0.65"/>
<rect x="444.66" y="259" width="99.68" height="1" fill="url(#gb)"/>
<rect x="444.66" y="259" width="99.68" height="1" fill="url(#gb2)" opacity="0.64"/>
<rect x="444.27" y="260" width="100.46" height="1" fill="url(#gb)"/>
<rect x="444.27" y="260" width="100.46" height="1" fill="url(#gb2)" opacity="0.63"/>
<rect x="443.88" y="261" width="101.24" height="1" fill="url(#gb)"/>
<rect x="443.88" y="261" width="101.24" height="1" fill="url(#gb2)" opacity="0.62"/>
<rect x="443.49" y="262" width="102.02" height="1" fill="url(#gb)"/>
<rect x="443.49" y="262" width="102.02" height="1" fill="url(#gb2)" opacity="0.62"/>
<rect x="443.10" y="263" width="102.81" height="1" fill="url(#gb)"/>
<rect x="443.10" y="263" width="102.81" height="1" fill="url(#gb2)" opacity="0.61"/>
<rect x="442.70" y="264" width="103.60" height="1" fill="url(#gb)"/>
<rect x="442.70" y="264" width="103.60" height="1" fill="url(#gb2)" opacity="0.60"/>
<rect x="442.30" y="265" width="104.41" height="1" fill="url(#gb)"/>
<rect x="442.30" y="265" width="104.41" height="1" fill="url(#gb2)" opacity="0.59"/>
<rect x="441.88" y="266" width="105.24" height="1" fill="url(#gb)"/>
<rect x="441.88" y="266" width="105.24" height="1" fill="url(#gb2)" opacity="0.58"/>
<rect x="441.45" y="267" width="106.09" height="1" fill="url(#gb)"/>
<rect x="441.45" y="267" width="106.09" height="1" fill="url(#gb2)" opacity="0.57"/>
<rect x="441.02" y="268" width="106.96" height="1" fill="url(#gb)"/>
<rect x="441.02" y="268" width="106.96" height="1" fill="url(#gb2)" opacity="0.57"/>
<rect x="440.58" y="269" width="107.84" height="1" fill="url(#gb)"/>
<rect x="440.58" y="269" width="107.84" height="1" fill="url(#gb2)" opacity="0.56"/>
<rect x="440.14" y="270" width="108.71" height="1" fill="url(#gb)"/>
<rect x="440.14" y="270" width="108.71" height="1" fill="url(#gb2)" opacity="0.55"/>
<rect x="439.71" y="271" width="109.59" height="1" fill="url(#gb)"/>
<rect x="439.71" y="271" width="109.59" height="1" fill="url(#gb2)" opacity="0.54"/>
<rect x="439.28" y="272" width="110.44" height="1" fill="url(#gb)"/>
<rect x="439.28" y="272" width="110.44" height="1" fill="url(#gb2)" opacity="0.53"/>
<rect x="438.86" y="273" width="111.28" height="1" fill="url(#gb)"/>
<rect x="438.86" y="273" width="111.28" height="1" fill="url(#gb2)" opacity="0.53"/>
<rect x="438.46" y="274" width="112.09" height="1" fill="url(#gb)"/>
<rect x="438.46" y="274" width="112.09" height="1" fill="url(#gb2)" opacity="0.52"/>
<rect x="438.07" y="275" width="112.86" height="1" fill="url(#gb)"/>
<rect x="438.07" y="275" width="112.86" height="1" fill="url(#gb2)" opacity="0.51"/>
<rect x="437.70" y="276" width="113.60" height="1" fill="url(#gb)"/>
<rect x="437.70" y="276" width="113.60" height="1" fill="url(#gb2)" opacity="0.50"/>
<rect x="437.36" y="277" width="114.28" height="1" fill="url(#gb)"/>
<rect x="437.36" y="277" width="114.28" height="1" fill="url(#gb2)" opacity="0.49"/>
<rect x="437.04" y="278" width="114.91" height="1" fill="url(#gb)"/>
<rect x="437.04" y="278" width="114.91" height="1" fill="url(#gb2)" opacity="0.48"/>
<rect x="436.74" y="279" width="115.53" height="1" fill="url(#gb)"/>
<rect x="436.74" y="279" width="115.53" height="1" fill="url(#gb2)" opacity="0.47"/>
<rect x="436.43" y="280" width="116.14" height="1" fill="url(#gb)"/>
<rect x="436.43" y="280" width="116.14" height="1" fill="url(#gb2)" opacity="0.47"/>
<rect x="436.13" y="281" width="116.73" height="1" fill="url(#gb)"/>
<rect x="436.13" y="281" width="116.73" height="1" fill="url(#gb2)" opacity="0.46"/>
<rect x="435.84" y="282" width="117.32" height="1" fill="url(#gb)"/>
<rect x="435.84" y="282" width="117.32" height="1" fill="url(#gb2)" opacity="0.45"/>
<rect x="435.55" y="283" width="117.90" height="1" fill="url(#gb)"/>
<rect x="435.55" y="283" width="117.90" height="1" fill="url(#gb2)" opacity="0.44"/>
<rect x="435.27" y="284" width="118.47" height="1" fill="url(#gb)"/>
<rect x="435.27" y="284" width="118.47" height="1" fill="url(#gb2)" opacity="0.43"/>
<rect x="434.99" y="285" width="119.02" height="1" fill="url(#gb)"/>
<rect x="434.99" y="285" width="119.02" height="1" fill="url(#gb2)" opacity="0.43"/>
<rect x="434.71" y="286" width="119.57" height="1" fill="url(#gb)"/>
<rect x="434.71" y="286" width="119.57" height="1" fill="url(#gb2)" opacity="0.42"/>
<rect x="434.44" y="287" width="120.11" height="1" fill="url(#gb)"/>
<rect x="434.44" y="287" width="120.11" height="1" fill="url(#gb2)" opacity="0.41"/>
<rect x="434.18" y="288" width="120.64" height="1" fill="url(#gb)"/>
<rect x="434.18" y="288" width="120.64" height="1" fill="url(#gb2)" opacity="0.40"/>
<rect x="433.92" y="289" width="121.16" height="1" fill="url(#gb)"/>
<rect x="433.92" y="289" width="121.16" height="1" fill="url(#gb2)" opacity="0.39"/>
<rect x="433.66" y="290" width="121.67" height="1" fill="url(#gb)"/>
<rect x="433.66" y="290" width="121.67" height="1" fill="url(#gb2)" opacity="0.38"/>
<rect x="433.41" y="291" width="122.18" height="1" fill="url(#gb)"/>
<rect x="433.41" y="291" width="122.18" height="1" fill="url(#gb2)" opacity="0.38"/>
<rect x="433.16" y="292" width="122.67" height="1" fill="url(#gb)"/>
<rect x="433.16" y="292" width="122.67" height="1" fill="url(#gb2)" opacity="0.37"/>
<rect x="432.92" y="293" width="123.16" height="1" fill="url(#gb)"/>
<rect x="432.92" y="293" width="123.16" height="1" fill="url(#gb2)" opacity="0.36"/>
<rect x="432.68" y="294" width="123.63" height="1" fill="url(#gb)"/>
<rect x="432.68" y="294" width="123.63" height="1" fill="url(#gb2)" opacity="0.35"/>
<rect x="432.45" y="295" width="124.10" height="1" fill="url(#gb)"/>
<rect x="432.45" y="295" width="124.10" height="1" fill="url(#gb2)" opacity="0.34"/>
<rect x="432.22" y="296" width="124.56" height="1" fill="url(#gb)"/>
<rect x="432.22" y="296" width="124.56" height="1" fill="url(#gb2)" opacity="0.33"/>
<rect x="431.99" y="297" width="125.01" height="1" fill="url(#gb)"/>
<rect x="431.99" y="297" width="125.01" height="1" fill="url(#gb2)" opacity="0.32"/>
<rect x="431.77" y="298" width="125.45" height="1" fill="url(#gb)"/>
<rect x="431.77" y="298" width="125.45" height="1" fill="url(#gb2)" opacity="0.32"/>
<rect x="431.56" y="299" width="125.89" height="1" fill="url(#gb)"/>
<rect x="431.56" y="299" width="125.89" height="1" fill="url(#gb2)" opacity="0.31"/>
<rect x="431.34" y="300" width="126.32" height="1" fill="url(#gb)"/>
<rect x="431.34" y="300" width="126.32" height="1" fill="url(#gb2)" opacity="0.30"/>
<rect x="431.13" y="301" width="126.73" height="1" fill="url(#gb)"/>
<rect x="431.13" y="301" width="126.73" height="1" fill="url(#gb2)" opacity="0.29"/>
<rect x="430.93" y="302" width="127.14" height="1" fill="url(#gb)"/>
<rect x="430.93" y="302" width="127.14" height="1" fill="url(#gb2)" opacity="0.28"/>
<rect x="430.73" y="303" width="127.54" height="1" fill="url(#gb)"/>
<rect x="430.73" y="303" width="127.54" height="1" fill="url(#gb2)" opacity="0.28"/>
<rect x="430.54" y="304" width="127.93" height="1" fill="url(#gb)"/>
<rect x="430.54" y="304" width="127.93" height="1" fill="url(#gb2)" opacity="0.27"/>
<rect x="430.35" y="305" width="128.30" height="1" fill="url(#gb)"/>
<rect x="430.35" y="305" width="128.30" height="1" fill="url(#gb2)" opacity="0.26"/>
<rect x="430.16" y="306" width="128.67" height="1" fill="url(#gb)"/>
<rect x="430.16" y="306" width="128.67" height="1" fill="url(#gb2)" opacity="0.25"/>
<rect x="429.98" y="307" width="129.03" height="1" fill="url(#gb)"/>
<rect x="429.98" y="307" width="129.03" height="1" fill="url(#gb2)" opacity="0.24"/>
<rect x="429.81" y="308" width="129.38" height="1" fill="url(#gb)"/>
<rect x="429.81" y="308" width="129.38" height="1" fill="url(#gb2)" opacity="0.23"/>
<rect x="429.64" y="309" width="129.72" height="1" fill="url(#gb)"/>
<rect x="429.64" y="309" width="129.72" height="1" fill="url(#gb2)" opacity="0.22"/>
<rect x="429.47" y="310" width="130.06" height="1" fill="url(#gb)"/>
<rect x="429.47" y="310" width="130.06" height="1" fill="url(#gb2)" opacity="0.22"/>
<rect x="429.31" y="311" width="130.38" height="1" fill="url(#gb)"/>
<rect x="429.31" y="311" width="130.38" height="1" fill="url(#gb2)" opacity="0.21"/>
<rect x="429.15" y="312" width="130.70" height="1" fill="url(#gb)"/>
<rect x="429.15" y="312" width="130.70" height="1" fill="url(#gb2)" opacity="0.20"/>
<rect x="428.99" y="313" width="131.01" height="1" fill="url(#gb)"/>
<rect x="428.99" y="313" width="131.01" height="1" fill="url(#gb2)" opacity="0.19"/>
<rect x="428.84" y="314" width="131.32" height="1" fill="url(#gb)"/>
<rect x="428.84" y="314" width="131.32" height="1" fill="url(#gb2)" opacity="0.18"/>
<rect x="428.69" y="315" width="131.61" height="1" fill="url(#gb)"/>
<rect x="428.69" y="315" width="131.61" height="1" fill="url(#gb2)" opacity="0.18"/>
<rect x="428.55" y="316" width="131.90" height="1" fill="url(#gb)"/>
<rect x="428.55" y="316" width="131.90" height="1" fill="url(#gb2)" opacity="0.17"/>
<rect x="428.41" y="317" width="132.19" height="1" fill="url(#gb)"/>
<rect x="428.41" y="317" width="132.19" height="1" fill="url(#gb2)" opacity="0.16"/>
<rect x="428.27" y="318" width="132.47" height="1" fill="url(#gb)"/>
<rect x="428.27" y="318" width="132.47" height="1" fill="url(#gb2)" opacity="0.15"/>
<rect x="428.13" y="319" width="132.74" height="1" fill="url(#gb)"/>
<rect x="428.13" y="319" width="132.74" height="1" fill="url(#gb2)" opacity="0.14"/>
<rect x="428.00" y="320" width="133.00" height="1" fill="url(#gb)"/>
<rect x="428.00" y="320" width="133.00" height="1" fill="url(#gb2)" opacity="0.13"/>
<rect x="427.87" y="321" width="133.27" height="1" fill="url(#gb)"/>
<rect x="427.87" y="321" width="133.27" height="1" fill="url(#gb2)" opacity="0.12"/>
<rect x="427.74" y="322" width="133.52" height="1" fill="url(#gb)"/>
<rect x="427.74" y="322" width="133.52" height="1" fill="url(#gb2)" opacity="0.12"/>
<rect x="427.61" y="323" width="133.78" height="1" fill="url(#gb)"/>
<rect x="427.61" y="323" width="133.78" height="1" fill="url(#gb2)" opacity="0.11"/>
<rect x="427.49" y="324" width="134.02" height="1" fill="url(#gb)"/>
<rect x="427.49" y="324" width="134.02" height="1" fill="url(#gb2)" opacity="0.10"/>
<rect x="427.37" y="325" width="134.25" height="1" fill="url(#gb)"/>
<rect x="427.37" y="325" width="134.25" height="1" fill="url(#gb2)" opacity="0.09"/>
<rect x="427.26" y="326" width="134.48" height="1" fill="url(#gb)"/>
<rect x="427.26" y="326" width="134.48" height="1" fill="url(#gb2)" opacity="0.08"/>
<rect x="427.15" y="327" width="134.69" height="1" fill="url(#gb)"/>
<rect x="427.15" y="327" width="134.69" height="1" fill="url(#gb2)" opacity="0.07"/>
<rect x="427.05" y="328" width="134.90" height="1" fill="url(#gb)"/>
<rect x="427.05" y="328" width="134.90" height="1" fill="url(#gb2)" opacity="0.07"/>
<rect x="426.95" y="329" width="135.09" height="1" fill="url(#gb)"/>
<rect x="426.95" y="329" width="135.09" height="1" fill="url(#gb2)" opacity="0.06"/>
<rect x="426.86" y="330" width="135.28" height="1" fill="url(#gb)"/>
<rect x="426.86" y="330" width="135.28" height="1" fill="url(#gb2)" opacity="0.05"/>
<rect x="426.77" y="331" width="135.47" height="1" fill="url(#gb)"/>
<rect x="426.77" y="331" width="135.47" height="1" fill="url(#gb2)" opacity="0.04"/>
<rect x="426.68" y="332" width="135.64" height="1" fill="url(#gb)"/>
<rect x="426.68" y="332" width="135.64" height="1" fill="url(#gb2)" opacity="0.03"/>
<rect x="426.59" y="333" width="135.81" height="1" fill="url(#gb)"/>
<rect x="426.59" y="333" width="135.81" height="1" fill="url(#gb2)" opacity="0.03"/>
<rect x="426.51" y="334" width="135.98" height="1" fill="url(#gb)"/>
<rect x="426.43" y="335" width="136.14" height="1" fill="url(#gb)"/>
<rect x="426.35" y="336" width="136.30" height="1" fill="url(#gb)"/>
<rect x="426.27" y="337" width="136.45" height="1" fill="url(#gb)"/>
<rect x="426.20" y="338" width="136.61" height="1" fill="url(#gb)"/>
<rect x="426.12" y="339" width="136.76" height="1" fill="url(#gb)"/>
<rect x="426.05" y="340" width="136.91" height="1" fill="url(#gb)"/>
<rect x="425.97" y="341" width="137.05" height="1" fill="url(#gb)"/>
<rect x="425.90" y="342" width="137.20" height="1" fill="url(#gb)"/>
<rect x="425.82" y="343" width="137.35" height="1" fill="url(#gb)"/>
<rect x="425.75" y="344" width="137.51" height="1" fill="url(#gb)"/>
<rect x="425.67" y="345" width="137.66" height="1" fill="url(#gb)"/>
<rect x="425.59" y="346" width="137.82" height="1" fill="url(#gb)"/>
<rect x="425.52" y="347" width="137.97" height="1" fill="url(#gb)"/>
<rect x="425.45" y="348" width="138.10" height="1" fill="url(#gb)"/>
<rect x="425.39" y="349" width="138.22" height="1" fill="url(#gb)"/>
<rect x="425.33" y="350" width="138.33" height="1" fill="url(#gb)"/>
<rect x="425.29" y="351" width="138.43" height="1" fill="url(#gb)"/>
<rect x="425.25" y="352" width="138.51" height="1" fill="url(#gb)"/>
<rect x="425.21" y="353" width="138.57" height="1" fill="url(#gb)"/>
<rect x="425.19" y="354" width="138.62" height="1" fill="url(#gb)"/>
<rect x="425.17" y="355" width="138.65" height="1" fill="url(#gb)"/>
<rect x="425.17" y="356" width="138.66" height="1" fill="url(#gb)"/>
<rect x="425.17" y="357" width="138.66" height="1" fill="url(#gb)"/>
<rect x="425.18" y="358" width="138.65" height="1" fill="url(#gb)"/>
<rect x="425.18" y="359" width="138.63" height="1" fill="url(#gb)"/>
<rect x="425.19" y="360" width="138.62" height="1" fill="url(#gb)"/>
<rect x="425.20" y="361" width="138.60" height="1" fill="url(#gb)"/>
<rect x="425.20" y="362" width="138.60" height="1" fill="url(#gb)"/>
<path d="M471.0 216.5 L468.1 218.5 L465.2 220.5 L463.0 222.5 L461.3 224.5 L459.9 226.5 L458.6 228.5 L457.4 230.5 L456.3 232.5 L455.3 234.5 L454.3 236.5 L453.4 238.5 L535.6 238.5 L534.7 236.5 L533.7 234.5 L532.7 232.5 L531.6 230.5 L530.4 228.5 L529.1 226.5 L527.7 224.5 L526.0 222.5 L523.8 220.5 L520.9 218.5 L518.0 216.5 Z" fill="url(#gtopsh)"/>
<path d="M471.0 216.5 L468.1 218.5 L465.2 220.5 L463.0 222.5 L461.3 224.5 L459.9 226.5 L458.6 228.5 L457.4 230.5 L456.3 232.5 L455.3 234.5 L454.3 236.5 L453.4 238.5 L452.5 240.5 L451.6 242.5 L450.8 244.5 L449.9 246.5 L449.1 248.5 L448.3 250.5 L447.5 252.5 L446.6 254.5 L445.8 256.5 L445.0 258.5 L444.3 260.5 L443.5 262.5 L442.7 264.5 L441.9 266.5 L441.0 268.5 L440.1 270.5 L439.3 272.5 L438.5 274.5 L437.7 276.5 L437.0 278.5 L436.4 280.5 L435.8 282.5 L435.3 284.5 L434.7 286.5 L434.2 288.5 L433.7 290.5 L433.2 292.5 L432.7 294.5 L432.2 296.5 L431.8 298.5 L431.3 300.5 L430.9 302.5 L430.5 304.5 L430.2 306.5 L429.8 308.5 L429.5 310.5 L429.1 312.5 L428.8 314.5 L428.5 316.5 L428.3 318.5 L428.0 320.5 L427.7 322.5 L427.5 324.5 L427.3 326.5 L427.1 328.5 L426.9 330.5 L426.7 332.5 L426.5 334.5 L426.4 336.5 L426.2 338.5 L426.0 340.5 L425.9 342.5 L425.7 344.5 L425.6 346.5 L425.4 348.5 L425.3 350.5 L425.2 352.5 L425.2 354.5 L425.2 356.5 L425.2 358.5 L425.2 360.5 L425.2 362.4" fill="none" stroke="#101010" stroke-width="1.6"/>
<path d="M518.0 216.5 L520.9 218.5 L523.8 220.5 L526.0 222.5 L527.7 224.5 L529.1 226.5 L530.4 228.5 L531.6 230.5 L532.7 232.5 L533.7 234.5 L534.7 236.5 L535.6 238.5 L536.5 240.5 L537.4 242.5 L538.2 244.5 L539.1 246.5 L539.9 248.5 L540.7 250.5 L541.5 252.5 L542.4 254.5 L543.2 256.5 L544.0 258.5 L544.7 260.5 L545.5 262.5 L546.3 264.5 L547.1 266.5 L548.0 268.5 L548.9 270.5 L549.7 272.5 L550.5 274.5 L551.3 276.5 L552.0 278.5 L552.6 280.5 L553.2 282.5 L553.7 284.5 L554.3 286.5 L554.8 288.5 L555.3 290.5 L555.8 292.5 L556.3 294.5 L556.8 296.5 L557.2 298.5 L557.7 300.5 L558.1 302.5 L558.5 304.5 L558.8 306.5 L559.2 308.5 L559.5 310.5 L559.9 312.5 L560.2 314.5 L560.5 316.5 L560.7 318.5 L561.0 320.5 L561.3 322.5 L561.5 324.5 L561.7 326.5 L561.9 328.5 L562.1 330.5 L562.3 332.5 L562.5 334.5 L562.6 336.5 L562.8 338.5 L563.0 340.5 L563.1 342.5 L563.3 344.5 L563.4 346.5 L563.6 348.5 L563.7 350.5 L563.8 352.5 L563.8 354.5 L563.8 356.5 L563.8 358.5 L563.8 360.5 L563.8 362.4" fill="none" stroke="#101010" stroke-width="1.6"/>
<path d="M453.0 239.2Q494.5 240.4 536.0 239.2" fill="none" stroke="#161616" stroke-width="1.3"/>
<rect x="474.9" y="187.3" width="39" height="17.6" fill="url(#gb2)"/><rect x="474.9" y="187.3" width="39" height="17.6" fill="none" stroke="#141414" stroke-width="1.5"/>
<rect x="475" y="208" width="38.8" height="5" fill="url(#gb2)"/>
<rect x="473" y="204.9" width="42.8" height="3.9" rx="1" fill="#161616"/>
<rect x="470.8" y="212.4" width="47.2" height="4" fill="#1a1a1a"/>
<rect x="425.2" y="362" width="138.6" height="7.4" fill="url(#gb)"/>
<rect x="428.3" y="369" width="132.6" height="4" fill="url(#gb)"/>
<rect x="425.2" y="362.9" width="138.6" height="0.9" fill="#e4e4e4" opacity="0.7"/>
<rect x="425.2" y="363.8" width="138.6" height="1.7" fill="#131313"/>
<rect x="425.2" y="367.1" width="138.6" height="1.7" fill="#131313"/>
<rect x="428.3" y="371.1" width="132.4" height="1.7" fill="#131313"/>
<path d="M425.3 353.5V369.3M563.7 353.5V369.3" stroke="#141414" stroke-width="1.2"/>
<rect x="428.3" y="372.6" width="132.6" height="139" fill="url(#gb)"/>
<path d="M428.5 369V512M560.7 369V512" stroke="#141414" stroke-width="1.1"/>
<path d="M425.5 515Q425.5 512.3 428.5 512.3H560.5Q563.6 512.3 563.6 515V539.5Q563.3 544 554.5 548.2H434.5Q425.8 544 425.5 539.5Z" fill="url(#gb)"/>
<path d="M425.5 536.3H563.6V539.5Q563.3 544 554.5 548.2H434.5Q425.8 544 425.5 539.5Z" fill="url(#gcham)"/>
<rect x="428.3" y="510.6" width="132.6" height="1.6" fill="#131313"/>
<rect x="427" y="514.3" width="135" height="0.7" fill="#555"/><rect x="446" y="514.2" width="9" height="0.9" fill="#161616"/><rect x="535" y="514.2" width="9" height="0.9" fill="#161616"/>
<rect x="425.5" y="517.1" width="138.1" height="1.8" fill="#131313"/>
<rect x="425.5" y="535.2" width="138.1" height="1.9" fill="#131313"/>
<path d="M425.5 515Q425.5 512.3 428.5 512.3M560.5 512.3Q563.6 512.3 563.6 515M425.5 514.5V539.5Q425.8 544 434.5 548.2H554.5Q563.3 544 563.6 539.5V514.5" fill="none" stroke="#141414" stroke-width="1.2"/>
<defs><linearGradient id="gbg" gradientUnits="userSpaceOnUse" x1="0" y1="127" x2="0" y2="608.6"><stop offset="0" stop-color="#333367"/><stop offset="1" stop-color="#a9a9c2"/></linearGradient>
<linearGradient id="gh" gradientUnits="userSpaceOnUse" x1="434" y1="0" x2="501" y2="0"><stop offset="0" stop-color="#5a5a5a"/><stop offset="0.15" stop-color="#a8a8a8"/><stop offset="0.4" stop-color="#b4b4b4"/><stop offset="0.75" stop-color="#c6c6c6"/><stop offset="0.93" stop-color="#cfcfcf"/><stop offset="1" stop-color="#9a9a9a"/></linearGradient></defs>
<path d="M476.8 239.5C481.1 239.5 485.4 240.5 488.9 242.1C492.3 243.7 495.5 246.1 497.5 249.0C499.5 251.9 500.9 255.9 501.0 259.4C501.1 262.8 499.5 266.0 498.4 269.7C497.2 273.4 495.7 276.9 494.1 281.8C492.5 286.7 490.5 293.6 488.9 299.1C487.3 304.6 486.0 310.4 484.6 314.6C483.2 318.8 482.5 321.1 480.3 324.1C478.1 327.1 475.1 330.6 471.6 332.8C468.1 335.0 463.5 337.0 459.5 337.1C455.5 337.2 450.9 335.6 447.5 333.6C444.1 331.6 441.0 328.4 438.8 325.0C436.6 321.6 435.2 317.2 434.5 312.9C433.8 308.6 433.9 304.0 434.5 299.1C435.1 294.2 436.4 289.0 438.0 283.5C439.6 278.0 441.6 271.8 444.0 266.3C446.4 260.8 449.4 254.7 452.6 250.7C455.8 246.7 459.0 244.0 463.0 242.1C467.0 240.2 472.5 239.5 476.8 239.5Z" fill="url(#gh)" stroke="#0e0e0e" stroke-width="1.9"/>
<path d="M471.0 256.0C469.8 258.3 465.7 264.8 463.5 270.0C461.3 275.2 459.5 281.8 458.0 287.0C456.5 292.2 455.3 296.7 454.5 301.0C453.7 305.3 453.0 309.7 453.0 313.0C453.0 316.3 454.2 319.7 454.5 321.0" fill="none" stroke="#000" stroke-opacity="0.2" stroke-width="5" stroke-linecap="round"/>
<path d="M470.0 243.5C468.2 244.9 462.3 247.9 459.0 252.0C455.7 256.1 452.4 262.5 450.0 268.0C447.6 273.5 445.9 279.7 444.5 285.0C443.1 290.3 441.9 295.2 441.5 300.0C441.1 304.8 441.2 309.9 442.0 314.0C442.8 318.1 444.2 321.7 446.0 324.5C447.8 327.3 450.5 329.5 453.0 331.0C455.5 332.5 459.7 333.2 461.0 333.6" fill="none" stroke="#000" stroke-opacity="0.1" stroke-width="4"/>
<path d="M470.0 243.5C468.2 244.9 462.3 247.9 459.0 252.0C455.7 256.1 452.4 262.5 450.0 268.0C447.6 273.5 445.9 279.7 444.5 285.0C443.1 290.3 441.9 295.2 441.5 300.0C441.1 304.8 441.2 309.9 442.0 314.0C442.8 318.1 444.2 321.7 446.0 324.5C447.8 327.3 450.5 329.5 453.0 331.0C455.5 332.5 459.7 333.2 461.0 333.6" fill="none" stroke="#111" stroke-width="1.7"/>
<path d="M476.0 247.0C474.2 248.2 468.5 250.7 465.5 254.5C462.5 258.3 460.2 264.6 458.0 270.0C455.8 275.4 453.9 281.8 452.5 287.0C451.1 292.2 450.0 296.5 449.5 301.0C449.0 305.5 449.0 310.4 449.5 314.0C450.0 317.6 451.1 320.2 452.5 322.5C453.9 324.8 457.1 326.7 458.0 327.5" fill="none" stroke="#111" stroke-width="1.7"/>
<path d="M471.0 256.0C469.8 258.3 465.7 264.8 463.5 270.0C461.3 275.2 459.5 281.8 458.0 287.0C456.5 292.2 455.3 296.7 454.5 301.0C453.7 305.3 453.0 309.7 453.0 313.0C453.0 316.3 454.2 319.7 454.5 321.0" fill="none" stroke="#111" stroke-width="1.7"/>
<path d="M438 273.2L461.5 275.8M437 287.9L458.8 290.5M457.5 337L462.5 329.5M466 241.5L470.5 249.5M472 240L476 248.5M486 241.3L484.5 252.5M494.3 281.3L487.5 284.5M484.3 315L477.5 319.5" stroke="#111" stroke-width="1.6" fill="none"/>
<path d="M478.5 252.5C480.6 252.1 484.1 252.2 486.3 253.3C488.5 254.5 490.6 256.9 491.5 259.4C492.4 261.8 492.2 263.7 491.5 268.0C490.8 272.3 488.8 279.2 487.2 285.3C485.6 291.4 483.7 298.3 482.0 304.3C480.3 310.3 478.7 317.5 476.8 321.5C474.9 325.5 473.1 327.1 470.8 328.4C468.5 329.7 465.3 330.0 463.0 329.3C460.7 328.6 458.2 326.6 457.0 324.1C455.8 321.7 455.4 318.8 455.7 314.6C456.0 310.4 457.3 304.9 458.7 299.1C460.1 293.4 462.2 285.9 463.9 280.1C465.6 274.3 467.4 268.5 469.0 264.5C470.6 260.5 471.8 257.9 473.4 255.9C475.0 253.9 476.4 252.9 478.5 252.5Z" fill="url(#gbg)" stroke="#0e0e0e" stroke-width="1.9"/>
<path d="M511.3 247.0C509.1 247.0 506.2 252.9 504.3 259.3C502.4 265.8 501.2 276.2 500.2 285.7C499.2 295.2 498.4 307.0 498.2 316.1C498.0 325.2 498.0 334.3 499.2 340.4C500.4 346.5 502.6 349.7 505.3 352.6C508.0 355.5 512.0 357.4 515.4 357.6C518.8 357.8 522.6 355.8 525.5 353.6C528.4 351.4 531.2 349.1 532.6 344.5C534.0 339.9 534.0 332.6 533.7 326.2C533.4 319.8 532.1 313.4 530.6 306.0C529.1 298.6 526.7 289.4 524.5 281.6C522.3 273.8 519.6 265.1 517.4 259.3C515.2 253.5 513.5 247.0 511.3 247.0Z" fill="none" stroke="#0c0c0c" stroke-width="5.6"/>
<path d="M511.3 247.0C509.1 247.0 506.2 252.9 504.3 259.3C502.4 265.8 501.2 276.2 500.2 285.7C499.2 295.2 498.4 307.0 498.2 316.1C498.0 325.2 498.0 334.3 499.2 340.4C500.4 346.5 502.6 349.7 505.3 352.6C508.0 355.5 512.0 357.4 515.4 357.6C518.8 357.8 522.6 355.8 525.5 353.6C528.4 351.4 531.2 349.1 532.6 344.5C534.0 339.9 534.0 332.6 533.7 326.2C533.4 319.8 532.1 313.4 530.6 306.0C529.1 298.6 526.7 289.4 524.5 281.6C522.3 273.8 519.6 265.1 517.4 259.3C515.2 253.5 513.5 247.0 511.3 247.0Z" fill="none" stroke="#8a8a8a" stroke-width="3.1" stroke-dasharray="5 2.2"/>
<path d="M511.3 247.0C509.1 247.0 506.2 252.9 504.3 259.3C502.4 265.8 501.2 276.2 500.2 285.7C499.2 295.2 498.4 307.0 498.2 316.1C498.0 325.2 498.0 334.3 499.2 340.4C500.4 346.5 502.6 349.7 505.3 352.6C508.0 355.5 512.0 357.4 515.4 357.6C518.8 357.8 522.6 355.8 525.5 353.6C528.4 351.4 531.2 349.1 532.6 344.5C534.0 339.9 534.0 332.6 533.7 326.2C533.4 319.8 532.1 313.4 530.6 306.0C529.1 298.6 526.7 289.4 524.5 281.6C522.3 273.8 519.6 265.1 517.4 259.3C515.2 253.5 513.5 247.0 511.3 247.0Z" fill="none" stroke="#0c0c0c" stroke-width="1.9"/>
<path d="M532.4 247.0C531.0 247.3 530.4 252.9 530.4 259.3C530.4 265.8 531.7 276.2 532.4 285.7C533.1 295.2 534.0 307.7 534.7 316.1C535.4 324.6 535.7 331.0 536.7 336.4C537.7 341.8 538.5 345.1 540.7 348.5C542.9 351.9 547.1 355.6 549.9 356.6C552.7 357.6 555.7 356.1 557.6 354.6C559.5 353.1 561.0 352.2 561.2 347.5C561.4 342.8 560.2 333.8 559.0 326.2C557.8 318.6 556.1 310.3 553.9 301.9C551.7 293.4 548.3 282.9 545.8 275.5C543.3 268.1 540.9 262.1 538.7 257.3C536.5 252.6 533.8 246.7 532.4 247.0Z" fill="none" stroke="#0c0c0c" stroke-width="5.6"/>
<path d="M532.4 247.0C531.0 247.3 530.4 252.9 530.4 259.3C530.4 265.8 531.7 276.2 532.4 285.7C533.1 295.2 534.0 307.7 534.7 316.1C535.4 324.6 535.7 331.0 536.7 336.4C537.7 341.8 538.5 345.1 540.7 348.5C542.9 351.9 547.1 355.6 549.9 356.6C552.7 357.6 555.7 356.1 557.6 354.6C559.5 353.1 561.0 352.2 561.2 347.5C561.4 342.8 560.2 333.8 559.0 326.2C557.8 318.6 556.1 310.3 553.9 301.9C551.7 293.4 548.3 282.9 545.8 275.5C543.3 268.1 540.9 262.1 538.7 257.3C536.5 252.6 533.8 246.7 532.4 247.0Z" fill="none" stroke="#8a8a8a" stroke-width="3.1" stroke-dasharray="5 2.2"/>
<path d="M532.4 247.0C531.0 247.3 530.4 252.9 530.4 259.3C530.4 265.8 531.7 276.2 532.4 285.7C533.1 295.2 534.0 307.7 534.7 316.1C535.4 324.6 535.7 331.0 536.7 336.4C537.7 341.8 538.5 345.1 540.7 348.5C542.9 351.9 547.1 355.6 549.9 356.6C552.7 357.6 555.7 356.1 557.6 354.6C559.5 353.1 561.0 352.2 561.2 347.5C561.4 342.8 560.2 333.8 559.0 326.2C557.8 318.6 556.1 310.3 553.9 301.9C551.7 293.4 548.3 282.9 545.8 275.5C543.3 268.1 540.9 262.1 538.7 257.3C536.5 252.6 533.8 246.7 532.4 247.0Z" fill="none" stroke="#0c0c0c" stroke-width="1.9"/>
<g fill="#9a9ac2" opacity="0.74">
<path d="M622.2 134.8L634.4 148H610Z"/>
<path d="M622.2 275.2L634 261.8H610.2Z"/>
<path d="M551.5 205L564 193V217Z"/>
<path d="M692.3 205L679.3 193V217Z"/>
<path d="M601.2 142.5L603.6 151.2C592.5 154.8 584.2 160.6 578.6 168.2L583.8 172.2L568.8 172.2L571 157.4L574.8 162.8C581 153.2 590 146.4 601.2 142.5Z"/>
<path d="M643.2 142.5L640.8 151.2C651.9 154.8 660.2 160.6 665.8 168.2L660.6 172.2L675.6 172.2L673.4 157.4L669.6 162.8C663.4 153.2 654.4 146.4 643.2 142.5Z"/>
</g>
<path d="M647 252.8L657.5 249L666.3 252V265.5L657 269.3L647 265.8Z" fill="#8888a6"/><path d="M647 252.8L657.5 249L666.3 252L656.8 255.6Z" fill="#a4a4c0"/><path d="M656.8 255.6L666.3 252V265.5L657 269.3Z" fill="#7c7c9a"/>
<path d="M671.6 256H684.2L678 262.4Z" fill="#6a6a8c"/>
<rect x="586.4" y="170.4" width="71" height="69.6" rx="9" fill="#a3a3c6" opacity="0.9"/>
<rect x="594.8" y="179.3" width="51.4" height="52.8" rx="2" fill="#d3d3e3"/>
<rect x="594.8" y="179.3" width="51.4" height="52.8" rx="2" fill="none" stroke="#bcbcd2" stroke-width="0.8"/>
<path d="M594.8 179.3h6l-6 6ZM646.2 179.3h-6l6 6ZM594.8 232.1h6l-6-6ZM646.2 232.1h-6l6-6Z" fill="#b4b4d0"/>
<g stroke="#e4e4f0" stroke-width="2.2" opacity="0.9"><path d="M590.5 174.5L598 182M653.5 174.5L646 182M590.5 236.5L598 229M653.5 236.5L646 229"/></g>
<g fill="none" stroke="#c2c2d6" stroke-width="0.8"><path d="M594.8 187.5Q603 187.5 603 179.3M646.2 187.5Q638 187.5 638 179.3M594.8 224Q603 224 603 232.1M646.2 224Q638 224 638 232.1"/></g>
<g fill="#3a3a6a"><circle cx="596.3" cy="180.6" r="1"/><circle cx="646.6" cy="180.6" r="1"/><circle cx="646.6" cy="229.8" r="1"/></g>
<path d="M595.7 229.8V193.5" stroke="#a6f0a6" stroke-width="1.3"/><path d="M597 230.4H633.2" stroke="#f2a0a0" stroke-width="1.3"/><path d="M596.3 230.6L587.5 238.8" stroke="#1010ee" stroke-width="1.5"/><circle cx="596.5" cy="230" r="1.2" fill="#e02020"/>
<text x="599.2" y="180.5" font-family="Liberation Sans,sans-serif" font-size="8.5" fill="#58dc58">Y</text>
<text x="648.6" y="230.6" font-family="Liberation Sans,sans-serif" font-size="8.5" fill="#ee6a6a">X</text>
<text x="584" y="245.6" font-family="Liberation Sans,sans-serif" font-size="9" fill="#1414ee">Z</text>
<text x="611.2" y="211.2" font-family="Liberation Sans,sans-serif" font-weight="bold" font-size="15.5" textLength="21" lengthAdjust="spacingAndGlyphs" fill="#0a0a0a">TOP</text>
<path d="M678.7 574.6V588" stroke="#0c8c0c" stroke-width="2"/><path d="M679 588.4H692.3" stroke="#8c1414" stroke-width="1.6"/><circle cx="678.7" cy="588.4" r="2" fill="#14148c"/>
<text x="681.6" y="574.6" font-family="Liberation Sans,sans-serif" font-size="9.5" fill="#0a0a0a">Y</text>
<text x="681.8" y="588.2" font-family="Liberation Sans,sans-serif" font-size="9.5" fill="#0a0a0a">Z</text>
<text x="695" y="588.2" font-family="Liberation Sans,sans-serif" font-size="9.5" fill="#0a0a0a">X</text>
</svg>
<!-- mdi tabs -->
<div class="a" style="left:292px;top:610px;width:119px;height:22px;background:#f0f0f0;border:1px solid #d9d9d9;box-sizing:border-box"></div>
<div class="a" style="left:410px;top:608px;width:141px;height:25px;background:#fff;border:1px solid #d9d9d9;border-bottom:none;box-sizing:border-box"></div>
<svg class="a" style="left:303px;top:611px" width="17" height="17" viewBox="0 0 17 17"><defs><linearGradient id="gfr2" x1="0" y1="0" x2="1" y2="0"><stop offset="0" stop-color="#a8000c"/><stop offset="0.35" stop-color="#e8101a"/><stop offset="1" stop-color="#ff1a1a"/></linearGradient></defs><path d="M0.2 0.4H9.2V3.9H4.1V5.6H7.8V8.3H4.1V16.2H0.2Z" fill="url(#gfr2)"/><circle cx="10.4" cy="10.6" r="4" fill="#3b69ad"/><circle cx="10.4" cy="10.6" r="5" fill="none" stroke="#3b69ad" stroke-width="1.9" stroke-dasharray="2.1 1.827"/><circle cx="10.4" cy="10.6" r="1.6" fill="#f4f6fa"/></svg>
<div class="t" id="t_start" style="left:323.2px;top:614.5px;transform-origin:0 0;transform:scaleX(0.961)">Start page</div>
<div class="a" style="left:382.5px;top:613px;width:14px;height:14.5px;background:#c4c4c4;border:1px solid #a8a8a8;border-radius:2px;box-sizing:border-box"></div>
<svg class="a" style="left:382.5px;top:613px" width="14" height="14.5" viewBox="0 0 14 14.5"><path d="M3.8 4L10.2 10.5M10.2 4L3.8 10.5" stroke="#fff" stroke-width="2"/></svg>
<svg class="a" style="left:425px;top:612px" width="17" height="17" viewBox="0 0 17 17"><defs><linearGradient id="gfr3" x1="0" y1="0" x2="1" y2="0"><stop offset="0" stop-color="#a8000c"/><stop offset="0.35" stop-color="#e8101a"/><stop offset="1" stop-color="#ff1a1a"/></linearGradient></defs><path d="M0.2 0.4H9.2V3.9H4.1V5.6H7.8V8.3H4.1V16.2H0.2Z" fill="url(#gfr3)"/><circle cx="10.4" cy="10.6" r="4" fill="#3b69ad"/><circle cx="10.4" cy="10.6" r="5" fill="none" stroke="#3b69ad" stroke-width="1.9" stroke-dasharray="2.1 1.827"/><circle cx="10.4" cy="10.6" r="1.6" fill="#f4f6fa"/></svg>
<div class="t" id="t_unn1" style="left:445.8px;top:615px;transform-origin:0 0;transform:scaleX(0.975)">Unnamed : 1*</div>
<div class="a" style="left:522px;top:614px;width:14px;height:14.5px;background:#e66a3e;border:1px solid #dc4a38;border-radius:2px;box-sizing:border-box"></div>
<svg class="a" style="left:522px;top:614px" width="14" height="14.5" viewBox="0 0 14 14.5"><path d="M3.8 4L10.2 10.5M10.2 4L3.8 10.5" stroke="#fff" stroke-width="2"/></svg>
<div id="status" class="a" style="left:0;top:636px;width:700px;height:30px;background:#f0f0f0">
  <div class="t" id="t_valid" style="left:3.3px;top:8px;transform-origin:0 0;transform:scaleX(0.956)">Valid, Internal name: Solid</div>
  <div class="a" style="left:459px;top:1px;width:1px;height:26px;background:#d4d4d4"></div>
  <div class="a" style="left:545px;top:1px;width:1px;height:26px;background:#d4d4d4"></div>
  <div class="a" style="left:679px;top:1px;width:1px;height:26px;background:#d4d4d4"></div>
  <svg class="a" style="left:485px;top:7px" width="12" height="16" viewBox="0 0 12 16"><rect x="1.6" y="1.3" width="8.6" height="13" rx="4" fill="#fafafa" stroke="#444" stroke-width="1.4"/><path d="M6 3.5V6.5" stroke="#444" stroke-width="1.2"/></svg>
  <div class="t" id="t_cad" style="left:501.3px;top:8px;transform-origin:0 0;transform:scaleX(0.847)">CAD</div>
  <svg class="a" style="left:528px;top:11px" width="10" height="6" viewBox="0 0 10 6"><path d="M1 1H9L5 5.2Z" fill="#111"/></svg>
  <div class="t" id="t_dim" style="left:550.0px;top:8px;transform-origin:0 0;transform:scaleX(0.947)">289.49 mm x 340.62 mm</div>
  <svg class="a" style="left:687px;top:15px" width="12" height="12" viewBox="0 0 12 12"><g fill="#b8b8b8"><rect x="8" y="1" width="2" height="2"/><rect x="8" y="5" width="2" height="2"/><rect x="8" y="9" width="2" height="2"/><rect x="4" y="5" width="2" height="2"/><rect x="4" y="9" width="2" height="2"/><rect x="0" y="9" width="2" height="2"/></g></svg>
</div>
<!-- window border -->
<div class="a" style="left:0;top:0;width:700px;height:666px;box-sizing:border-box;border:1px solid #a8a8a8;border-top-color:#8a8a8a;pointer-events:none"></div>
</body></html>
